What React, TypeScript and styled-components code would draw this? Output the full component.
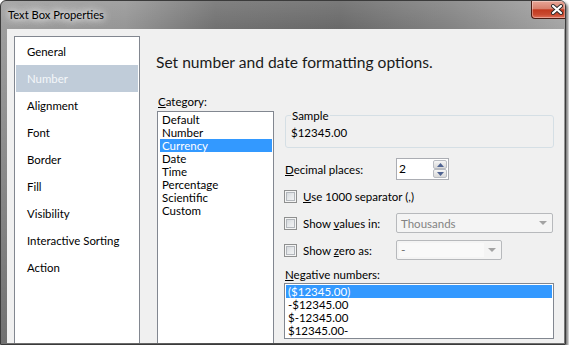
import React from "react"
import styled, { createGlobalStyle } from "styled-components"

const UI_FONT = `Lato, "Noto Sans", sans-serif`

const GlobalStyle = createGlobalStyle`
  html, body {
    margin: 0;
    padding: 0;
    background: #ffffff;
  }
  body {
    font-family: ${UI_FONT};
    color: #000;
  }
`

const pages = [
  "General",
  "Number",
  "Alignment",
  "Font",
  "Border",
  "Fill",
  "Visibility",
  "Interactive Sorting",
  "Action",
]

const categories = [
  "Default",
  "Number",
  "Currency",
  "Date",
  "Time",
  "Percentage",
  "Scientific",
  "Custom",
]

const negatives = ["($12345.00)", "-$12345.00", "$-12345.00", "$12345.00-"]

export default function App() {
  return (
    <>
      <GlobalStyle />
      <Window>
        <TitleBar>
          <Title>Text Box Properties</Title>
          <CloseButton>
            <svg width="12" height="11" viewBox="0 0 12 11">
              <path
                d="M2 2 L10 9 M10 2 L2 9"
                stroke="#2b2b2b"
                strokeWidth="4"
                strokeLinecap="round"
              />
              <path
                d="M2 2 L10 9 M10 2 L2 9"
                stroke="#ffffff"
                strokeWidth="2.2"
                strokeLinecap="round"
              />
            </svg>
          </CloseButton>
        </TitleBar>
        <Client>
          <Nav>
            {pages.map((p) => (
              <NavItem key={p} $selected={p === "Number"}>
                {p}
              </NavItem>
            ))}
          </Nav>
          <Panel>
            <Heading>Set number and date formatting options.</Heading>
            <Body>
              <CategoryCol>
                <FieldLabel>
                  <u>C</u>ategory:
                </FieldLabel>
                <CategoryList>
                  {categories.map((c) => (
                    <ListItem key={c} $selected={c === "Currency"}>
                      {c}
                    </ListItem>
                  ))}
                </CategoryList>
              </CategoryCol>
              <OptionsCol>
                <Group>
                  <Legend>Sample</Legend>
                  <SampleText>$12345.00</SampleText>
                </Group>
                <SpinRow>
                  <RowLabel>
                    <u>D</u>ecimal places:
                  </RowLabel>
                  <SpinBox>
                    <SpinValue>2</SpinValue>
                    <SpinButtons>
                      <SpinButton>
                        <svg width="7" height="4" viewBox="0 0 7 4">
                          <path d="M0 4 L3.5 0 L7 4 Z" fill="#4f6392" />
                        </svg>
                      </SpinButton>
                      <SpinButton>
                        <svg width="7" height="4" viewBox="0 0 7 4">
                          <path d="M0 0 L7 0 L3.5 4 Z" fill="#4f6392" />
                        </svg>
                      </SpinButton>
                    </SpinButtons>
                  </SpinBox>
                </SpinRow>
                <CheckRow>
                  <CheckLabel>
                    <Checkbox />
                    <span>
                      <u>U</u>se 1000 separator (,)
                    </span>
                  </CheckLabel>
                </CheckRow>
                <OptionRow>
                  <CheckLabel>
                    <Checkbox />
                    <span>
                      Show <u>v</u>alues in:
                    </span>
                  </CheckLabel>
                  <Dropdown $width={157}>
                    <DropdownText>Thousands</DropdownText>
                    <Arrow />
                  </Dropdown>
                </OptionRow>
                <OptionRow>
                  <CheckLabel>
                    <Checkbox />
                    <span>
                      Show <u>z</u>ero as:
                    </span>
                  </CheckLabel>
                  <Dropdown $width={106}>
                    <ComboField>-</ComboField>
                    <Arrow />
                  </Dropdown>
                </OptionRow>
                <NegLabel>
                  <u>N</u>egative numbers:
                </NegLabel>
                <NegList>
                  {negatives.map((n, i) => (
                    <ListItem key={n} $selected={i === 0}>
                      {n}
                    </ListItem>
                  ))}
                </NegList>
              </OptionsCol>
            </Body>
          </Panel>
        </Client>
      </Window>
    </>
  )
}

const Window = styled.div`
  width: 566px;
  height: 345px;
  box-sizing: border-box;
  display: flex;
  flex-direction: column;
  overflow: hidden;
  border: 1px solid #3b3b3b;
  border-radius: 6px 6px 0 0;
  background: linear-gradient(
      180deg,
      rgba(255, 255, 255, 0.12) 0,
      rgba(0, 0, 0, 0) 30px,
      rgba(0, 0, 0, 0.28) 100%
    ),
    linear-gradient(
      90deg,
      #9d9d9d 0%,
      #959595 22%,
      #707070 38%,
      #686868 60%,
      #828282 80%,
      #a4a4a4 100%
    );
  box-shadow: 2px 2px 3px rgba(0, 0, 0, 0.55);
`

const TitleBar = styled.div`
  height: 28px;
  flex-shrink: 0;
  display: flex;
  align-items: flex-start;
  padding-left: 7px;
`

const Title = styled.div`
  margin-top: 6px;
  font-size: 11.2px;
  line-height: 16px;
  color: #000;
  text-shadow: 0 0 6px #fff, 0 0 10px rgba(255, 255, 255, 0.9),
    0 0 14px rgba(255, 255, 255, 0.7);
`

const CloseButton = styled.div`
  margin-left: auto;
  width: 34px;
  height: 18px;
  box-sizing: border-box;
  display: flex;
  align-items: center;
  padding-left: 19px;
  border: 1px solid #4a1b12;
  border-top: none;
  border-right: none;
  border-radius: 0 0 0 4px;
  background: linear-gradient(
    180deg,
    #e7a596 0%,
    #d7806d 45%,
    #c2391f 52%,
    #c94a30 80%,
    #e0705a 100%
  );
  box-shadow: inset 0 0 0 1px rgba(255, 255, 255, 0.35);
`

const Client = styled.div`
  flex: 1;
  min-height: 0;
  margin: 0 1px 1px 6px;
  display: flex;
  overflow: hidden;
  background: #f0f0f0;
`

const Nav = styled.div`
  width: 126px;
  flex-shrink: 0;
  box-sizing: border-box;
  margin: 7px 0 0 7px;
  padding: 1px;
  background: #fff;
  border: 1px solid #828790;
  border-bottom: none;
`

const NavItem = styled.div<{ $selected?: boolean }>`
  height: 27px;
  display: flex;
  align-items: center;
  padding-left: 11px;
  font-size: 11.4px;
  color: ${({ $selected }) => ($selected ? "#f4f7fa" : "#000")};
  background: ${({ $selected }) => ($selected ? "#c0ccd9" : "transparent")};
`

const Panel = styled.div`
  flex: 1;
  min-width: 0;
  display: flex;
  flex-direction: column;
  padding: 23px 10px 0 16px;
`

const Heading = styled.div`
  font-size: 15.6px;
  line-height: 20px;
  color: #1a1a1a;
`

const Body = styled.div`
  flex: 1;
  display: flex;
  margin-top: 22px;
`

const CategoryCol = styled.div`
  width: 117px;
  margin-left: 1px;
  display: flex;
  flex-direction: column;
`

const FieldLabel = styled.div`
  font-size: 11.5px;
  line-height: 15px;
  padding-left: 1px;
`

const CategoryList = styled.div`
  flex: 1;
  margin-top: 2px;
  padding: 1px 1px 0 2px;
  background: #fff;
  border: 1px solid #828790;
  border-bottom: none;
`

const ListItem = styled.div<{ $selected?: boolean }>`
  height: 13px;
  line-height: 13px;
  padding-left: 2px;
  font-size: 11.5px;
  white-space: nowrap;
  color: ${({ $selected }) => ($selected ? "#fff" : "#000")};
  background: ${({ $selected }) => ($selected ? "#3399ff" : "transparent")};
`

const OptionsCol = styled.div`
  width: 269px;
  margin-left: 11px;
  display: flex;
  flex-direction: column;
`

const Group = styled.fieldset`
  margin: 14px 0 0;
  padding: 2px 5px 7px;
  min-width: 0;
  border: 1px solid #d5dfe5;
  border-radius: 3px;
`

const Legend = styled.legend`
  padding: 0 1px;
  font-size: 11.5px;
  line-height: 15px;
`

const SampleText = styled.div`
  font-size: 11.5px;
  line-height: 15px;
`

const SpinRow = styled.div`
  height: 22px;
  margin-top: 10px;
  display: flex;
  align-items: center;
`

const RowLabel = styled.div`
  width: 111px;
  font-size: 11.5px;
`

const SpinBox = styled.div`
  width: 53px;
  height: 22px;
  box-sizing: border-box;
  display: flex;
  background: #fff;
  border: 1px solid #abadb3;
`

const SpinValue = styled.div`
  flex: 1;
  padding-left: 2px;
  font-size: 12px;
  line-height: 20px;
`

const SpinButtons = styled.div`
  width: 14px;
  margin: 1px 1px 1px 0;
  display: flex;
  flex-direction: column;
`

const SpinButton = styled.div`
  flex: 1;
  box-sizing: border-box;
  display: flex;
  align-items: center;
  justify-content: center;
  border: 1px solid #b9bcc2;
  border-radius: 2px;
  background: linear-gradient(180deg, #f6f6f6 0%, #e6e6e6 50%, #d9d9d9 100%);
`

const CheckRow = styled.div`
  height: 20px;
  margin-top: 6px;
  display: flex;
  align-items: center;
`

const OptionRow = styled(CheckRow)`
  margin-top: 7px;
`

const CheckLabel = styled.label`
  width: 112px;
  margin-left: -1px;
  display: flex;
  align-items: center;
  gap: 6px;
  font-size: 11.5px;
  white-space: nowrap;
`

const Checkbox = styled.span`
  width: 13px;
  height: 13px;
  box-sizing: border-box;
  flex-shrink: 0;
  border: 1px solid #8e8f8f;
  background: linear-gradient(135deg, #cdd1d6 0%, #e6e8ea 50%, #f8f8f8 100%);
  box-shadow: inset 0 0 0 1px #f4f4f4, inset 0 0 0 2px #b3b7bc;
`

const Dropdown = styled.div<{ $width: number }>`
  width: ${({ $width }) => $width}px;
  height: 20px;
  box-sizing: border-box;
  display: flex;
  align-items: center;
  padding: 0 5px 0 2px;
  border: 1px solid #b7b9bc;
  border-radius: 2px;
  background: #f4f4f4;
`

const DropdownText = styled.div`
  flex: 1;
  padding-left: 2px;
  font-size: 11.5px;
  color: #838383;
`

const ComboField = styled.div`
  width: 85px;
  height: 14px;
  margin-right: auto;
  padding-left: 2px;
  box-sizing: border-box;
  font-size: 12px;
  line-height: 14px;
  color: #6d6d6d;
  background: #f9f9f9;
`

const Arrow = styled.span`
  width: 0;
  height: 0;
  border-left: 4px solid transparent;
  border-right: 4px solid transparent;
  border-top: 4px solid #a3a3a3;
`

const NegLabel = styled.div`
  margin-top: 7px;
  font-size: 11.5px;
  line-height: 15px;
`

const NegList = styled.div`
  width: 270px;
  margin: 1px 0 0 -1px;
  padding: 1px;
  box-sizing: border-box;
  background: #fff;
  border: 1px solid #828790;
`
